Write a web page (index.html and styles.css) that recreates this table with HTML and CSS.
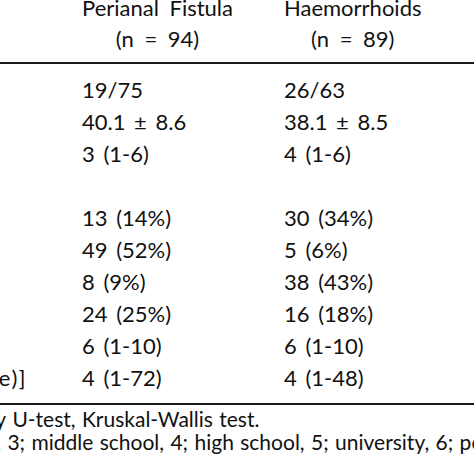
FILE: index.html
```html
<!DOCTYPE html>
<html>
<head>
<meta charset="utf-8">
<link rel="stylesheet" href="styles.css">
</head>
<body>
<div class="page">
  <div class="thead grid">
    <div class="cell"></div>
    <div class="cell"><div class="hd">Perianal Fistula<br>(n = 94)</div></div>
    <div class="cell"><div class="hd">Haemorrhoids<br>(n = 89)</div></div>
  </div>
  <div class="tbody">
    <div class="grid row"><div class="lab"></div><div>19/75</div><div>26/63</div></div>
    <div class="grid row"><div class="lab"></div><div>40.1 ± 8.6</div><div>38.1 ± 8.5</div></div>
    <div class="grid row"><div class="lab"></div><div>3 (1-6)</div><div>4 (1-6)</div></div>
    <div class="grid row"><div class="lab"></div><div></div><div></div></div>
    <div class="grid row"><div class="lab"></div><div>13 (14%)</div><div>30 (34%)</div></div>
    <div class="grid row"><div class="lab"></div><div>49 (52%)</div><div>5 (6%)</div></div>
    <div class="grid row"><div class="lab"></div><div>8 (9%)</div><div>38 (43%)</div></div>
    <div class="grid row"><div class="lab"></div><div>24 (25%)</div><div>16 (18%)</div></div>
    <div class="grid row"><div class="lab"></div><div>6 (1-10)</div><div>6 (1-10)</div></div>
    <div class="grid row"><div class="lab"><span class="labtext">Duration of symptoms [months, median (rate)]</span></div><div>4 (1-72)</div><div>4 (1-48)</div></div>
  </div>
  <div class="notes">
    <div class="note"><span class="pre pre1"><span>Mann-Whitney</span></span> U-test, Kruskal-Wallis test.</div>
    <div class="note"><span class="pre pre2"><span>primary school,</span></span> 3; middle school, 4; high school, 5; university, 6; postgraduate</div>
  </div>
</div>
</body>
</html>
```

FILE: styles.css
```css
html, body {
  margin: 0;
  padding: 0;
  background: #ffffff;
  overflow: hidden;
}
body {
  width: 474px;
  height: 474px;
  font-family: Lato, "Open Sans", sans-serif;
  color: #111111;
}
.page {
  margin-top: -8px;
}
.grid {
  display: grid;
  grid-template-columns: 82px 202px 1fr;
}
.thead {
  font-size: 22px;
  line-height: 31px;
  padding-bottom: 8px;
  border-bottom: 2px solid #1c1c1c;
  word-spacing: 5px;
}
.hd {
  display: inline-block;
  text-align: center;
  white-space: nowrap;
}
.tbody {
  font-size: 22px;
  line-height: 32px;
  padding-top: 10px;
  padding-bottom: 9px;
  border-bottom: 2px solid #1c1c1c;
  white-space: nowrap;
  word-spacing: 3px;
}
.row {
  height: 32px;
}
.lab {
  display: flex;
  justify-content: flex-end;
  padding-right: 55px;
  min-width: 0;
}
.labtext {
  white-space: nowrap;
  flex: none;
  letter-spacing: 1.5px;
}
.notes {
  font-size: 21px;
  line-height: 23px;
  padding-top: 2px;
  white-space: nowrap;
  word-spacing: 1px;
}
.pre {
  display: inline-flex;
  justify-content: flex-end;
  vertical-align: top;
}
.pre > span {
  flex: none;
}
.pre1 {
  width: 6px;
}
.pre2 {
  width: 1px;
}
```
